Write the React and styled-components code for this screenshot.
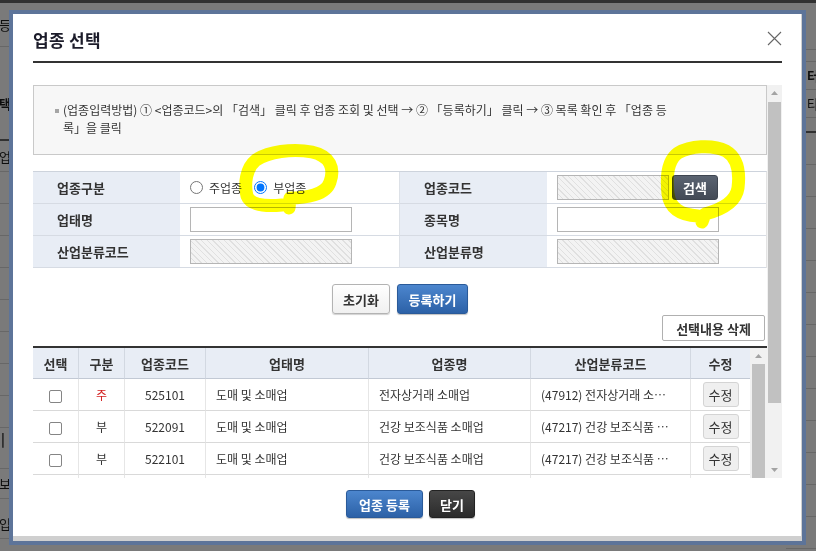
import React from "react";
import styled, { createGlobalStyle, css } from "styled-components";

const GlobalStyle = createGlobalStyle`
  html, body { margin: 0; padding: 0; overflow: hidden; background: #fff; }
  body { font-family: "Noto Sans CJK KR", "Noto Sans", sans-serif; color: #333; }
  * { box-sizing: border-box; }
`;

const Root = styled.div`
  position: relative;
  width: 816px;
  height: 551px;
  overflow: hidden;
`;

/* ---------- background page (behind the dim layer) ---------- */
const Page = styled.div`
  display: flex;
  flex-direction: column;
  height: 100%;
  background: #fff;
`;
const TopBar = styled.div`
  height: 3px;
  background: #666;
  flex-shrink: 0;
`;
const PageBody = styled.div`
  flex: 1;
  display: flex;
  justify-content: space-between;
`;
const SideCol = styled.div`
  width: ${(p) => p.$w}px;
  display: flex;
  flex-direction: column;
  overflow: hidden;
`;
const PageRow = styled.div`
  height: ${(p) => p.$h}px;
  flex-shrink: 0;
  display: flex;
  align-items: center;
  padding-left: ${(p) => p.$pl || 0}px;
  border-bottom: ${(p) =>
    p.$line ? `${p.$line}px solid ${p.$dark ? "#666" : "#d8d8d8"}` : "none"};
  font-size: 13px;
  font-weight: ${(p) => (p.$bold ? 700 : 400)};
  color: #1e1e1e;
  white-space: nowrap;
`;
const PageText = styled.span`
  margin-left: ${(p) => p.$shift || 0}px;
`;
const Dim = styled.div`
  position: absolute;
  inset: 0;
  background: rgba(0, 0, 0, 0.52);
`;

/* ---------- drawn scrollbar ---------- */
const ScrollTrack = styled.div`
  width: ${(p) => p.$w}px;
  flex-shrink: 0;
  align-self: stretch;
  background: #f1f1f1;
  display: flex;
  flex-direction: column;
  align-items: center;
`;
const ScrollArrow = styled.div`
  width: 100%;
  height: 16px;
  flex-shrink: 0;
  display: flex;
  align-items: center;
  justify-content: center;
`;
const ScrollThumb = styled.div`
  width: 13px;
  flex-shrink: 0;
  background: #c1c1c1;
  margin-top: ${(p) => p.$offset}px;
  height: ${(p) => p.$size}px;
`;
const ScrollSpacer = styled.div`
  flex: 1;
`;

function Arrow({ down }) {
  return (
    <svg width="7" height="4" viewBox="0 0 7 4">
      <polygon points={down ? "0,0 7,0 3.5,4" : "0,4 3.5,0 7,4"} fill="#a3a3a3" />
    </svg>
  );
}
function Scrollbar({ w = 15, offset, size }) {
  return (
    <ScrollTrack $w={w}>
      <ScrollArrow>
        <Arrow />
      </ScrollArrow>
      <ScrollThumb $offset={offset} $size={size} />
      <ScrollSpacer />
      <ScrollArrow>
        <Arrow down />
      </ScrollArrow>
    </ScrollTrack>
  );
}

/* ---------- modal ---------- */
const ModalFrame = styled.div`
  position: absolute;
  left: 9px;
  top: 10px;
  width: 797px;
  height: 535px;
  border: 4px solid #5d7499;
  background: #cfcfcf;
  padding: 0 1px 5px 0;
  display: flex;
`;
const Panel = styled.div`
  flex: 1;
  background: #fff;
  display: flex;
  flex-direction: column;
  padding: 0 19px 0 20px;
`;
const Header = styled.div`
  height: 49px;
  flex-shrink: 0;
  padding-top: 4px;
  border-bottom: 2px solid #333;
  display: flex;
  align-items: center;
  justify-content: space-between;
`;
const Title = styled.h2`
  margin: 0;
  font-size: 17px;
  font-weight: 700;
  color: #1c1c2a;
  letter-spacing: 0.3px;
`;
const CloseButton = styled.button`
  width: 15px;
  height: 15px;
  padding: 0;
  border: 0;
  background: transparent;
  display: flex;
  margin-top: -3px;
  cursor: pointer;
`;
const ScrollBody = styled.div`
  margin-top: 22px;
  height: 393px;
  flex-shrink: 0;
  display: flex;
`;
const ScrollContent = styled.div`
  flex: 1;
  min-width: 0;
  overflow: hidden;
`;
const InfoBox = styled.div`
  border: 1px solid #c9c9c9;
  background: #f7f7f7;
  padding: 15px 20px 17px 21px;
  display: flex;
  align-items: flex-start;
  gap: 4px;
  font-size: 12px;
  line-height: 18px;
  color: #333;
`;
const Bullet = styled.span`
  width: 4px;
  height: 4px;
  background: #a5a5a5;
  margin-top: 8px;
  flex-shrink: 0;
`;
const InfoText = styled.p`
  margin: 0;
  white-space: nowrap;
`;

const FormGrid = styled.div`
  margin-top: 16px;
  display: grid;
  grid-template-columns: 147px 219px 148px 1fr;
  border-top: 1px solid #cdd3dc;
  border-right: 1px solid #e4e4e4;
`;
const Label = styled.div`
  height: 32px;
  background: #e8edf5;
  border-bottom: 1px solid #d6dbe3;
  border-left: ${(p) => (p.$sep ? "1px solid #dde1e7" : "none")};
  display: flex;
  align-items: center;
  padding-left: 24px;
  font-size: 13px;
  font-weight: 700;
  color: #333;
`;
const Value = styled.div`
  height: 32px;
  background: #fff;
  border-bottom: 1px solid #d6dbe3;
  display: flex;
  align-items: center;
  padding-left: 10px;
`;
const hatch = css`
  background: repeating-linear-gradient(
    45deg,
    #f3f3f3 0px,
    #f3f3f3 3px,
    #e0e0e0 3px,
    #e0e0e0 4px
  );
`;
const TextInput = styled.input`
  width: ${(p) => p.$w || 162}px;
  height: 25px;
  margin: 0;
  border: 1px solid #b5b5b5;
  border-radius: 0;
  padding: 0 5px;
  font-family: inherit;
  font-size: 12px;
  outline: none;
  ${(p) => (p.$hatched ? hatch : "background: #fff;")}
`;
const RadioGroup = styled.div`
  display: flex;
  align-items: center;
`;
const Radio = styled.input`
  width: 13px;
  height: 13px;
  margin: 0;
`;
const RadioText = styled.label`
  font-size: 12px;
  color: #333;
  margin: 0 ${(p) => (p.$last ? 0 : 12)}px 0 6px;
`;

const variants = {
  white: css`
    background: linear-gradient(#ffffff, #f0f0f0);
    border: 1px solid #b3b3b3;
    color: #333;
    box-shadow: 0 1px 1px rgba(0, 0, 0, 0.18);
  `,
  plain: css`
    background: #fff;
    border: 1px solid #b0b0b0;
    color: #333;
    border-radius: 2px;
  `,
  blue: css`
    background: linear-gradient(#4c86ce, #2c61a7);
    border: 1px solid #2a5a99;
    color: #fff;
    box-shadow: 0 1px 1px rgba(0, 0, 0, 0.25);
  `,
  dark: css`
    background: linear-gradient(#474747, #2b2b2b);
    border: 1px solid #222;
    color: #fff;
    box-shadow: 0 1px 1px rgba(0, 0, 0, 0.25);
  `,
  slate: css`
    background: linear-gradient(#5a6371, #434a56);
    border: 1px solid #3e4550;
    color: #fff;
  `,
  light: css`
    background: #efefef;
    border: 1px solid #d4d4d4;
    color: #333;
    font-weight: 400;
  `,
};
const Btn = styled.button`
  width: ${(p) => p.$w}px;
  height: ${(p) => p.$h}px;
  padding: 0;
  margin: 0;
  border-radius: 3px;
  font-family: inherit;
  font-size: 13px;
  font-weight: 700;
  cursor: pointer;
  white-space: nowrap;
  flex-shrink: 0;
  ${(p) => variants[p.$v]}
`;
const SearchBtn = styled(Btn)`
  margin-left: 3px;
`;
const ButtonRow = styled.div`
  margin-top: 16px;
  display: flex;
  justify-content: center;
  gap: 7px;
`;
const DeleteRow = styled.div`
  margin-top: 1px;
  display: flex;
  justify-content: flex-end;
  padding-right: 2px;
`;
const ListWrap = styled.div`
  margin-top: 5px;
  border-top: 2px solid #333;
  height: 212px;
  display: flex;
`;
const ListBody = styled.div`
  flex: 1;
  min-width: 0;
  overflow: hidden;
`;
const ListTable = styled.table`
  width: 100%;
  table-layout: fixed;
  border-collapse: separate;
  border-spacing: 0;
  font-size: 12px;
`;
const HeadRow = styled.tr`
  height: 31px;
`;
const Th = styled.th`
  background: #e8edf5;
  border-bottom: 1px solid #c2c9d4;
  border-left: ${(p) => (p.$first ? "none" : "1px solid #d2d8e1")};
  font-size: 13px;
  font-weight: 700;
  color: #333;
  text-align: center;
  padding: 0;
`;
const Tr = styled.tr`
  height: 32px;
`;
const Td = styled.td`
  border-bottom: 1px solid #d9d9d9;
  border-left: ${(p) => (p.$first ? "none" : "1px solid #e6e6e6")};
  text-align: ${(p) => p.$align || "center"};
  padding: ${(p) => (p.$align === "left" ? "0 18px 0 10px" : "0")};
  color: ${(p) => (p.$red ? "#d21f1f" : "#333")};
  white-space: nowrap;
  overflow: hidden;
  text-overflow: ellipsis;
  vertical-align: middle;
`;
const Check = styled.input`
  appearance: none;
  width: 13px;
  height: 13px;
  margin: 0;
  border: 1px solid #858585;
  border-radius: 2px;
  background: #fff;
  vertical-align: middle;
`;
const Footer = styled.div`
  margin-top: 12px;
  display: flex;
  justify-content: center;
  gap: 6px;
  padding-left: 6px;
`;
const Annotation = styled.svg`
  position: absolute;
  left: 0;
  top: 0;
  pointer-events: none;
  mix-blend-mode: multiply;
`;

const leftRows = [
  { h: 44, text: "등록", line: 1, shift: -1 },
  { h: 40 },
  { h: 32, text: "선택", bold: true, shift: -13 },
  { h: 22, line: 2, dark: true },
  { h: 31, text: "업종", line: 1, shift: -1 },
  { h: 32, line: 1 },
  { h: 32, line: 1 },
  { h: 32, line: 1 },
  { h: 32, line: 1 },
  { h: 32, line: 1 },
  { h: 32, line: 1 },
  { h: 32, line: 1 },
  { h: 32, line: 1 },
  { h: 20, text: "|", bold: true, shift: 1 },
  { h: 21, line: 1 },
  { h: 30, text: "보", line: 1, shift: -1 },
  { h: 10 },
  { h: 30, text: "입", line: 1, shift: -1 },
  { h: 40 },
];
const rightRows = [
  { h: 47, line: 1 },
  { h: 12, line: 1 },
  { h: 28, text: "터", bold: true, line: 1 },
  { h: 28, text: "타", line: 1 },
  { h: 15, line: 2, dark: true },
  ...Array.from({ length: 13 }, () => ({ h: 32, line: 1 })),
];

const rows = [
  ["주", "525101", "도매 및 소매업", "전자상거래 소매업", "(47912) 전자상거래 소매업"],
  ["부", "522091", "도매 및 소매업", "건강 보조식품 소매업", "(47217) 건강 보조식품 소매업"],
  ["부", "522101", "도매 및 소매업", "건강 보조식품 소매업", "(47217) 건강 보조식품 소매업"],
  ["부", "523931", "도매 및 소매업", "화장품 소매업", "(47813) 화장품, 비누 및 방향제 소매업"],
];

const cols = [45, 46, 81, 163, 162, 160, null];

function SideRows({ list, pl }) {
  return list.map((r, i) => (
    <PageRow key={i} $h={r.h} $line={r.line} $dark={r.dark} $bold={r.bold} $pl={pl}>
      {r.text && <PageText $shift={r.shift}>{r.text}</PageText>}
    </PageRow>
  ));
}

export default function App() {
  return (
    <Root>
      <GlobalStyle />
      <Page>
        <TopBar />
        <PageBody>
          <SideCol $w={60}>
            <SideRows list={leftRows} pl={0} />
          </SideCol>
          <SideCol $w={30}>
            <SideRows list={rightRows} pl={21} />
          </SideCol>
        </PageBody>
      </Page>
      <Dim />

      <ModalFrame>
        <Panel>
          <Header>
            <Title>업종 선택</Title>
            <CloseButton aria-label="닫기">
              <svg width="15" height="15" viewBox="0 0 15 15">
                <path d="M1 1 L14 14 M14 1 L1 14" stroke="#666" strokeWidth="1.1" fill="none" />
              </svg>
            </CloseButton>
          </Header>

          <ScrollBody>
            <ScrollContent>
              <InfoBox>
                <Bullet />
                <InfoText>
                  (업종입력방법) ① &lt;업종코드&gt;의 「검색」 클릭 후 업종 조회 및 선택 → ② 「등록하기」 클릭 → ③ 목록 확인 후 「업종 등
                  <br />
                  록」을 클릭
                </InfoText>
              </InfoBox>

              <FormGrid>
                <Label>업종구분</Label>
                <Value>
                  <RadioGroup>
                    <Radio type="radio" name="kind" id="main" />
                    <RadioText htmlFor="main">주업종</RadioText>
                    <Radio type="radio" name="kind" id="sub" defaultChecked />
                    <RadioText htmlFor="sub" $last>
                      부업종
                    </RadioText>
                  </RadioGroup>
                </Value>
                <Label $sep>업종코드</Label>
                <Value>
                  <TextInput $w={112} $hatched readOnly />
                  <SearchBtn $v="slate" $w={46} $h={25}>
                    검색
                  </SearchBtn>
                </Value>

                <Label>업태명</Label>
                <Value>
                  <TextInput />
                </Value>
                <Label $sep>종목명</Label>
                <Value>
                  <TextInput />
                </Value>

                <Label>산업분류코드</Label>
                <Value>
                  <TextInput $hatched readOnly />
                </Value>
                <Label $sep>산업분류명</Label>
                <Value>
                  <TextInput $hatched readOnly />
                </Value>
              </FormGrid>

              <ButtonRow>
                <Btn $v="white" $w={58} $h={30}>
                  초기화
                </Btn>
                <Btn $v="blue" $w={71} $h={30}>
                  등록하기
                </Btn>
              </ButtonRow>

              <DeleteRow>
                <Btn $v="plain" $w={103} $h={26}>
                  선택내용 삭제
                </Btn>
              </DeleteRow>

              <ListWrap>
                <ListBody>
                  <ListTable>
                    <colgroup>
                      {cols.map((w, i) => (
                        <col key={i} style={w ? { width: w } : undefined} />
                      ))}
                    </colgroup>
                    <thead>
                      <HeadRow>
                        <Th $first>선택</Th>
                        <Th>구분</Th>
                        <Th>업종코드</Th>
                        <Th>업태명</Th>
                        <Th>업종명</Th>
                        <Th>산업분류코드</Th>
                        <Th>수정</Th>
                      </HeadRow>
                    </thead>
                    <tbody>
                      {rows.map((r, i) => (
                        <Tr key={i}>
                          <Td $first>
                            <Check type="checkbox" />
                          </Td>
                          <Td $red={r[0] === "주"}>{r[0]}</Td>
                          <Td>{r[1]}</Td>
                          <Td $align="left">{r[2]}</Td>
                          <Td $align="left">{r[3]}</Td>
                          <Td $align="left">{r[4]}</Td>
                          <Td>
                            <Btn $v="light" $w={36} $h={25}>
                              수정
                            </Btn>
                          </Td>
                        </Tr>
                      ))}
                    </tbody>
                  </ListTable>
                </ListBody>
                <Scrollbar w={17} offset={0} size={175} />
              </ListWrap>
            </ScrollContent>
            <Scrollbar w={15} offset={1} size={301} />
          </ScrollBody>

          <Footer>
            <Btn $v="blue" $w={77} $h={28}>
              업종 등록
            </Btn>
            <Btn $v="dark" $w={46} $h={28}>
              닫기
            </Btn>
          </Footer>
        </Panel>
      </ModalFrame>

      <Annotation width="816" height="551" viewBox="0 0 816 551">
        <g fill="none" stroke="#ffff00" strokeWidth="13" strokeLinecap="round" strokeLinejoin="round">
          <path d="M 289 208 L 290 198 C 305 198, 326 195, 330 182 C 335 168, 330 156, 312 152 C 292 148, 268 152, 256 160 C 246 168, 244 184, 247 196 C 250 204, 262 207, 282 205" />
          <path d="M 702 222 L 705 214 C 720 210, 736 202, 738 188 C 740 172, 738 158, 726 151 C 712 144, 690 146, 678 153 C 668 160, 666 176, 668 194 C 670 208, 680 215, 698 216" />
        </g>
      </Annotation>
    </Root>
  );
}
